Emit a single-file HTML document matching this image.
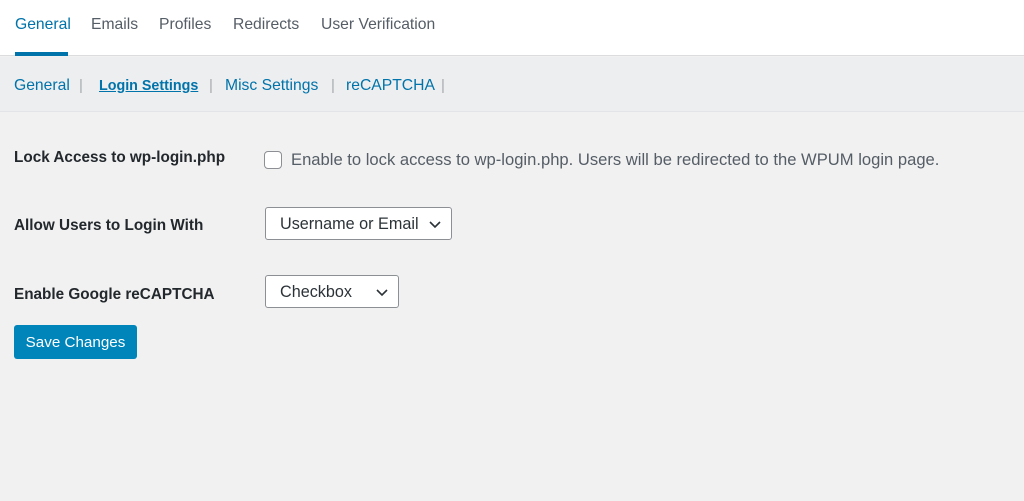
<!DOCTYPE html>
<html><head><meta charset="utf-8"><style>
*{margin:0;padding:0;box-sizing:border-box}
body{width:1024px;height:501px;background:#f1f1f1;font-family:"Liberation Sans",sans-serif;position:relative;overflow:hidden}
.top{position:absolute;left:0;top:0;width:1024px;height:56px;background:#fff;border-bottom:1px solid #dcdcde}
.t{position:absolute;top:16px;font-size:15.7px;color:#555d66}
.sub{position:absolute;left:0;top:57px;width:1024px;height:55px;background:#eceef0;border-bottom:1px solid #e2e4e7}
.s{position:absolute;top:77px;font-size:15.7px;color:#0073aa}
.p{position:absolute;top:77px;font-size:15px;color:#a7aaad}
.l{position:absolute;left:14px;font-size:15.3px;font-weight:bold;color:#23282d}
.sel{position:absolute;left:265px;height:33px;background:#fff;border:1px solid #8c8f94;border-radius:3px;font-size:16.2px;color:#2c3338;padding:7px 0 0 14px}
.sel svg{position:absolute;right:10px;top:13px}
</style></head><body>
<div class="top"></div>
<div class="t" style="left:15px;color:#0073aa">General</div>
<div style="position:absolute;left:15px;top:52px;width:53px;height:4px;background:#0073aa"></div>
<div class="t" style="left:91px">Emails</div>
<div class="t" style="left:159px">Profiles</div>
<div class="t" style="left:233px">Redirects</div>
<div class="t" style="left:321px">User Verification</div>
<div class="sub"></div>
<div class="s" style="left:14px">General</div>
<div class="p" style="left:79px">|</div>
<div class="s" style="left:99px;font-weight:bold;font-size:14.3px;top:78px;text-decoration:underline;color:#0073aa">Login Settings</div>
<div class="p" style="left:209px">|</div>
<div class="s" style="left:225px">Misc Settings</div>
<div class="p" style="left:331px">|</div>
<div class="s" style="left:346px">reCAPTCHA</div>
<div class="p" style="left:441px">|</div>
<div class="l" style="top:149px">Lock Access to wp-login.php</div>
<div style="position:absolute;left:264px;top:151px;width:18px;height:18px;border:1px solid #8c8f94;border-radius:4px;background:#fff"></div>
<div style="position:absolute;left:291px;top:150px;font-size:16.6px;color:#555d66">Enable to lock access to wp-login.php. Users will be redirected to the WPUM login page.</div>
<div class="l" style="top:217px">Allow Users to Login With</div>
<div class="sel" style="top:207px;width:187px">Username or Email<svg width="12" height="8" viewBox="0 0 12 8"><path d="M1 1l5 5 5-5" fill="none" stroke="#2c3338" stroke-width="1.6"/></svg></div>
<div class="l" style="top:286px">Enable Google reCAPTCHA</div>
<div class="sel" style="top:275px;width:134px">Checkbox<svg width="12" height="8" viewBox="0 0 12 8"><path d="M1 1l5 5 5-5" fill="none" stroke="#2c3338" stroke-width="1.6"/></svg></div>
<div style="position:absolute;left:14px;top:325px;width:123px;height:34px;background:#0085ba;border-radius:3px;color:#fff;font-size:15.2px;padding-top:9px;text-align:center">Save Changes</div>
</body></html>
